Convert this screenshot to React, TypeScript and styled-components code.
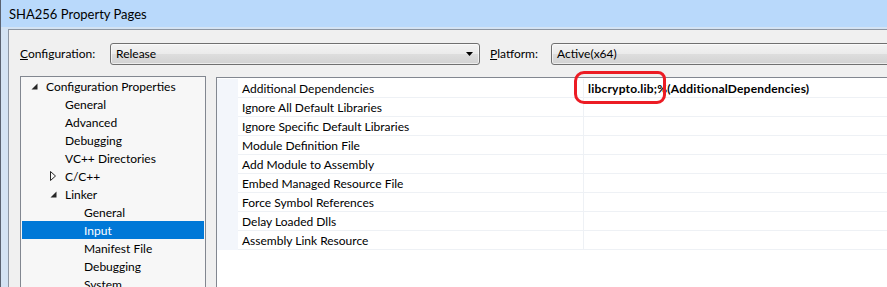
import React from 'react';
import styled, { createGlobalStyle } from 'styled-components';

const GlobalStyle = createGlobalStyle`
  html, body {
    margin: 0;
    padding: 0;
    background: #f0f0f0;
  }
  body {
    font-family: Lato, 'Noto Sans', sans-serif;
    font-size: 12px;
    color: #000;
  }
`;

const Window = styled.div`
  position: relative;
  width: 887px;
  height: 287px;
  overflow: hidden;
  display: flex;
  flex-direction: column;
  background: #cddff2;
  border-left: 1px solid #5a6270;
  box-sizing: border-box;
`;

const TitleBar = styled.div`
  height: 27px;
  flex: none;
  display: flex;
  align-items: center;
  padding-left: 8px;
  background: #b9d9fb;
  font-size: 13px;
  color: #000;
`;

const Frame = styled.div`
  flex: 1;
  display: flex;
  padding: 2px 0 0 7px;
  background: #d4e3f3;
  min-height: 0;
`;

const Client = styled.div`
  flex: 1;
  display: flex;
  flex-direction: column;
  background: #f0f0f0;
  border-top: 1px solid #8d96a2;
  border-left: 1px solid #8d96a2;
  padding-left: 11px;
  min-width: 0;
  overflow: hidden;
`;

const ConfigRow = styled.div`
  height: 47px;
  flex: none;
  display: flex;
  align-items: center;
`;

const Label = styled.div<{ $width: number }>`
  width: ${p => p.$width}px;
  flex: none;
  u {
    text-decoration: underline;
  }
`;

const Combo = styled.div<{ $width: number }>`
  width: ${p => p.$width}px;
  height: 22px;
  flex: none;
  box-sizing: border-box;
  display: flex;
  align-items: center;
  justify-content: space-between;
  padding: 0 5px 0 5px;
  border: 1px solid #707070;
  border-radius: 3px;
  background: linear-gradient(to bottom, #f3f3f3 0%, #ebebeb 48%, #dddddd 52%, #d2d2d2 100%);
  box-shadow: inset 0 0 0 1px rgba(255, 255, 255, 0.6);
`;

const Spacer = styled.div<{ $w: number }>`
  width: ${p => p.$w}px;
  flex: none;
`;

const Panes = styled.div`
  flex: 1;
  display: flex;
  gap: 10px;
  min-height: 0;
`;

const Tree = styled.div`
  width: 186px;
  flex: none;
  box-sizing: border-box;
  margin-top: -1px;
  border: 1px solid #828790;
  border-bottom: none;
  background: #f7f7f7;
`;

const TreeItem = styled.div<{ $level: number; $selected?: boolean }>`
  height: 18px;
  display: flex;
  align-items: center;
  margin: 0 1px;
  padding-left: ${p => 5 + p.$level * 19}px;
  background: ${p => (p.$selected ? '#0078d7' : 'transparent')};
  color: ${p => (p.$selected ? '#fff' : '#000')};
`;

const Toggle = styled.span`
  width: 19px;
  height: 18px;
  flex: none;
  box-sizing: border-box;
  padding-left: 4px;
  display: flex;
  align-items: center;
`;

const Grid = styled.div`
  flex: 1;
  box-sizing: border-box;
  border-left: 1px solid #828790;
  border-top: 1px solid #828790;
  background: #fff;
  padding-top: 1px;
`;

const Row = styled.div`
  display: flex;
  height: 19px;
`;

const Margin = styled.div`
  width: 21px;
  flex: none;
  background: #f3f6fb;
`;

const Cell = styled.div<{ $width?: number; $bold?: boolean }>`
  ${p => (p.$width ? `width: ${p.$width}px; flex: none;` : 'flex: 1;')}
  box-sizing: border-box;
  display: flex;
  align-items: center;
  padding-left: 4px;
  border-bottom: 1px solid #eef1f5;
  border-right: ${p => (p.$width ? '1px solid #eef1f5' : 'none')};
  font-weight: ${p => (p.$bold ? 700 : 400)};
  letter-spacing: ${p => (p.$bold ? '0.2px' : 'normal')};
  background: #fff;
  white-space: nowrap;
`;

const Annotation = styled.div`
  position: absolute;
  left: 573px;
  top: 71px;
  width: 92px;
  height: 33px;
  box-sizing: border-box;
  border: 3px solid #ec1c24;
  border-radius: 10px 8px 9px 10px;
  pointer-events: none;
`;

const Expanded = () => (
  <svg width="7" height="7" viewBox="0 0 7 7">
    <path d="M6.5 0.5 L6.5 6.5 L0.5 6.5 Z" fill="#262626" />
  </svg>
);

const Collapsed = () => (
  <svg width="6" height="10" viewBox="0 0 6 10">
    <path d="M0.5 0.5 L5.5 5 L0.5 9.5 Z" fill="none" stroke="#262626" strokeWidth="1" />
  </svg>
);

const DropArrow = () => (
  <svg width="8" height="4" viewBox="0 0 8 4">
    <path d="M0 0 L7 0 L3.5 4 Z" fill="#000" />
  </svg>
);

type Node = { label: string; level: number; toggle?: 'open' | 'closed'; selected?: boolean };

const treeNodes: Node[] = [
  { label: 'Configuration Properties', level: 0, toggle: 'open' },
  { label: 'General', level: 1 },
  { label: 'Advanced', level: 1 },
  { label: 'Debugging', level: 1 },
  { label: 'VC++ Directories', level: 1 },
  { label: 'C/C++', level: 1, toggle: 'closed' },
  { label: 'Linker', level: 1, toggle: 'open' },
  { label: 'General', level: 2 },
  { label: 'Input', level: 2, selected: true },
  { label: 'Manifest File', level: 2 },
  { label: 'Debugging', level: 2 },
  { label: 'System', level: 2 },
];

const properties = [
  { name: 'Additional Dependencies', value: 'libcrypto.lib;%(AdditionalDependencies)' },
  { name: 'Ignore All Default Libraries', value: '' },
  { name: 'Ignore Specific Default Libraries', value: '' },
  { name: 'Module Definition File', value: '' },
  { name: 'Add Module to Assembly', value: '' },
  { name: 'Embed Managed Resource File', value: '' },
  { name: 'Force Symbol References', value: '' },
  { name: 'Delay Loaded Dlls', value: '' },
  { name: 'Assembly Link Resource', value: '' },
];

export default function App() {
  return (
    <>
      <GlobalStyle />
      <Window>
        <TitleBar>SHA256 Property Pages</TitleBar>
        <Frame>
          <Client>
            <ConfigRow>
              <Label $width={90}>
                <u>C</u>onfiguration:
              </Label>
              <Combo $width={370}>
                <span>Release</span>
                <DropArrow />
              </Combo>
              <Spacer $w={10} />
              <Label $width={61}>
                <u>P</u>latform:
              </Label>
              <Combo $width={400}>
                <span>Active(x64)</span>
              </Combo>
            </ConfigRow>
            <Panes>
              <Tree>
                {treeNodes.map((n, i) => (
                  <TreeItem key={i} $level={n.level} $selected={n.selected}>
                    <Toggle>
                      {n.toggle === 'open' && <Expanded />}
                      {n.toggle === 'closed' && <Collapsed />}
                    </Toggle>
                    {n.label}
                  </TreeItem>
                ))}
              </Tree>
              <Grid>
                {properties.map(p => (
                  <Row key={p.name}>
                    <Margin />
                    <Cell $width={346}>{p.name}</Cell>
                    <Cell $bold={!!p.value}>{p.value}</Cell>
                  </Row>
                ))}
              </Grid>
            </Panes>
          </Client>
        </Frame>
        <Annotation />
      </Window>
    </>
  );
}
